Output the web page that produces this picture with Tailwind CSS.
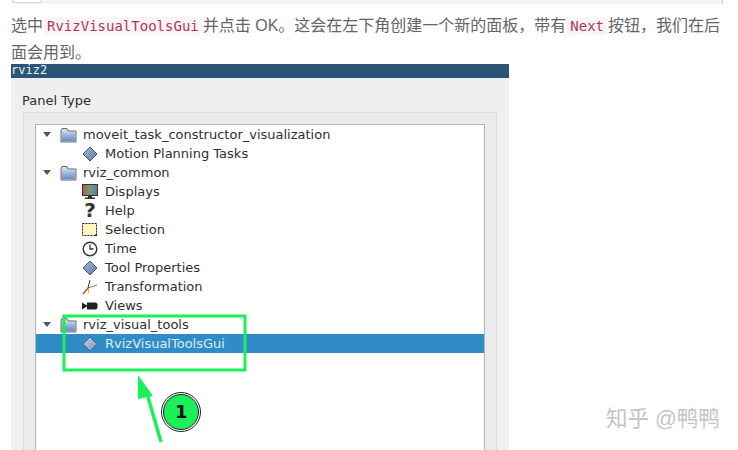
<!DOCTYPE html>
<html lang="zh">
<head>
  <meta charset="UTF-8">
  <title>RvizVisualToolsGui</title>
  <script src="https://cdn.jsdelivr.net/npm/@tailwindcss/browser@4"></script>
</head>
<body class="bg-white">
  <svg class="absolute w-0 h-0">
    <defs>
      <linearGradient id="folder" x1="0" y1="0" x2="0" y2="1"><stop offset="0" stop-color="#b4c6e4"/><stop offset="1" stop-color="#6a8ec6"/></linearGradient>
      <linearGradient id="diamond" x1="0" y1="0" x2="1" y2="1"><stop offset="0" stop-color="#a9bbd8"/><stop offset="1" stop-color="#5f78a6"/></linearGradient>
      <linearGradient id="diamond-on" x1="0" y1="0" x2="1" y2="1"><stop offset="0" stop-color="#c3d0e4"/><stop offset="1" stop-color="#7f96bd"/></linearGradient>
      <linearGradient id="screen" x1="0" x2="1"><stop offset="0" stop-color="#c4524f"/><stop offset=".5" stop-color="#6fa06c"/><stop offset="1" stop-color="#6a6fb8"/></linearGradient>
    </defs>
  </svg>
  <div class="relative w-[738px] h-[450px] overflow-hidden font-['Liberation_Sans','Noto_Sans_CJK_SC',sans-serif]">
    <!-- end of the code block above -->
    <div class="ml-[12px] w-[711px] h-[4px] bg-[#f4f4f4] border-r border-[#c8c8c8]">
      <div class="w-[30px] h-[3px] bg-white border border-t-0 border-[#d4d4d4] rounded-b-sm"></div>
    </div>

    <p class="mt-[8px] ml-[11px] w-[712px] text-[16px] leading-[27px] text-[#646464]">
      选中<code class="mx-[1px] px-[3px] py-[1px] rounded-sm bg-[#fcf3f5] text-[#a8395c] text-[14px] leading-none font-['DejaVu_Sans_Mono',monospace]">RvizVisualToolsGui</code>并点击 OK。这会在左下角创建一个新的面板，带有<code class="mx-[1px] px-[3px] py-[1px] rounded-sm bg-[#fcf3f5] text-[#a8395c] text-[14px] leading-none font-['DejaVu_Sans_Mono',monospace]">Next</code>按钮，我们在后面会用到。
    </p>

    <!-- rviz2 dialog -->
    <div class="mt-[-2px] ml-[11px] w-[498px] font-['DejaVu_Sans',sans-serif] text-[13px] text-[#2e2e2e]">
      <div class="h-[14px] bg-[#2a5578] text-[#f2f2f2] text-[12px] leading-[13px] font-['DejaVu_Sans_Mono',monospace]">rviz2</div>
      <div class="h-[400px] bg-[#efefef] pl-[12px] pr-[12px]">
        <div class="pt-[15px] h-[34px] leading-[16px] -ml-[1px]">Panel Type</div>
        <div class="w-[474px] h-[400px] border border-[#dcdcdc] bg-[#ebebeb] pl-[11px] pt-[11px]">
          <div class="w-[450px] h-[400px] border border-[#b4b4b4] bg-white">
            <ul class="leading-[19px]">
              <li class="h-[19px] flex items-center pl-[7px]">
                <svg class="w-[8px] h-[5px] mr-[9px]" viewBox="0 0 8 5"><path d="M0 0h8L4 5z" fill="#555"/></svg>
                <svg class="w-[17px] h-[16px] mr-[6px]" viewBox="0 0 17 16"><path d="M1 3.500V15h15V4H8L7 1.500H2z" fill="#d8d8d8" stroke="#5a6a80"/><path d="M2 5.500h13V14H2z" fill="url(#folder)"/></svg>
                <span>moveit_task_constructor_visualization</span>
              </li>
              <li class="h-[19px] flex items-center pl-[46px]">
                <svg class="w-[16px] h-[16px] mr-[7px]" viewBox="0 0 16 16"><path d="M8 1l7 7-7 7-7-7z" fill="url(#diamond)" stroke="#44526a"/></svg>
                <span>Motion Planning Tasks</span>
              </li>
              <li class="h-[19px] flex items-center pl-[7px]">
                <svg class="w-[8px] h-[5px] mr-[9px]" viewBox="0 0 8 5"><path d="M0 0h8L4 5z" fill="#555"/></svg>
                <svg class="w-[17px] h-[16px] mr-[6px]" viewBox="0 0 17 16"><path d="M1 3.500V15h15V4H8L7 1.500H2z" fill="#d8d8d8" stroke="#5a6a80"/><path d="M2 5.500h13V14H2z" fill="url(#folder)"/></svg>
                <span>rviz_common</span>
              </li>
              <li class="h-[19px] flex items-center pl-[46px]">
                <svg class="w-[16px] h-[16px] mr-[7px]" viewBox="0 0 16 16"><rect x="0.500" y="0.500" width="15" height="11" fill="url(#screen)" stroke="#333"/><path d="M6 12h4v1.500h3V15H3v-1.500h3z" fill="#333"/></svg>
                <span>Displays</span>
              </li>
              <li class="h-[19px] flex items-center pl-[46px]">
                <span class="w-[16px] mr-[7px] text-center text-[20px] font-bold text-[#333] leading-[19px]">?</span>
                <span>Help</span>
              </li>
              <li class="h-[19px] flex items-center pl-[46px]">
                <svg class="w-[16px] h-[16px] mr-[7px]" viewBox="0 0 16 16"><rect x="0.500" y="1.500" width="14" height="12" fill="#fdf6c0" stroke="#222" stroke-dasharray="2 1"/><path d="M12 14h3v-3z" fill="#222"/></svg>
                <span>Selection</span>
              </li>
              <li class="h-[19px] flex items-center pl-[46px]">
                <svg class="w-[16px] h-[16px] mr-[7px]" viewBox="0 0 16 16"><circle cx="8" cy="8" r="6.800" fill="#fff" stroke="#333" stroke-width="1.400"/><path d="M8 3.500V8h3.500" fill="none" stroke="#333" stroke-width="1.300"/></svg>
                <span>Time</span>
              </li>
              <li class="h-[19px] flex items-center pl-[46px]">
                <svg class="w-[16px] h-[16px] mr-[7px]" viewBox="0 0 16 16"><path d="M8 1l7 7-7 7-7-7z" fill="url(#diamond)" stroke="#44526a"/></svg>
                <span>Tool Properties</span>
              </li>
              <li class="h-[19px] flex items-center pl-[46px]">
                <svg class="w-[16px] h-[16px] mr-[7px]" viewBox="0 0 16 16"><path d="M6 9L15 6" stroke="#4a9a4a" fill="none"/><path d="M6 9L8 1" stroke="#333" fill="none"/><path d="M6 9L1 15" stroke="#c03a3a" stroke-width="1.300" fill="none"/><path d="M6 9l1 5" stroke="#d9a53a" fill="none"/></svg>
                <span>Transformation</span>
              </li>
              <li class="h-[19px] flex items-center pl-[46px]">
                <svg class="w-[16px] h-[16px] mr-[7px]" viewBox="0 0 16 16"><path d="M0 4.500l5 3v-3h9l1.500 1.500v4L14 11.500H5v-3l-5 3z" fill="#222"/></svg>
                <span>Views</span>
              </li>
              <li class="h-[19px] flex items-center pl-[7px]">
                <svg class="w-[8px] h-[5px] mr-[9px]" viewBox="0 0 8 5"><path d="M0 0h8L4 5z" fill="#555"/></svg>
                <svg class="w-[17px] h-[16px] mr-[6px]" viewBox="0 0 17 16"><path d="M1 3.500V15h15V4H8L7 1.500H2z" fill="#d8d8d8" stroke="#5a6a80"/><path d="M2 5.500h13V14H2z" fill="url(#folder)"/></svg>
                <span>rviz_visual_tools</span>
              </li>
              <li class="h-[19px] flex items-center pl-[46px] bg-[#308cc6] text-[#dcebf7]">
                <svg class="w-[16px] h-[16px] mr-[7px]" viewBox="0 0 16 16"><path d="M8 1l7 7-7 7-7-7z" fill="url(#diamond-on)" stroke="#3d5f88"/></svg>
                <span>RvizVisualToolsGui</span>
              </li>
            </ul>
          </div>
        </div>
      </div>
    </div>

    <!-- green annotations drawn over the screenshot -->
    <svg class="absolute left-0 top-0 w-[738px] h-[450px]" viewBox="0 0 738 450">
      <rect x="64" y="316" width="181" height="54" fill="none" stroke="#19f05a" stroke-width="3"/>
      <path d="M161 442L148 397" stroke="#19f05a" stroke-width="3.500" fill="none"/>
      <path d="M138 375L153 396L138 399z" fill="#19f05a"/>
      <circle cx="181" cy="412" r="19.500" fill="#fff" stroke="#222"/>
      <circle cx="181" cy="412" r="17.500" fill="#19f05a" stroke="#222"/>
    </svg>
    <span class="absolute left-[175px] top-[401px] text-[18px] leading-[22px] font-bold text-[#111] font-['DejaVu_Sans',sans-serif]">1</span>

    <!-- watermark -->
    <div class="absolute left-[606px] top-[407px] text-[21.500px] leading-[24px] text-[#c4c4c4] whitespace-nowrap">知乎 @鸭鸭</div>
  </div>
</body>
</html>
